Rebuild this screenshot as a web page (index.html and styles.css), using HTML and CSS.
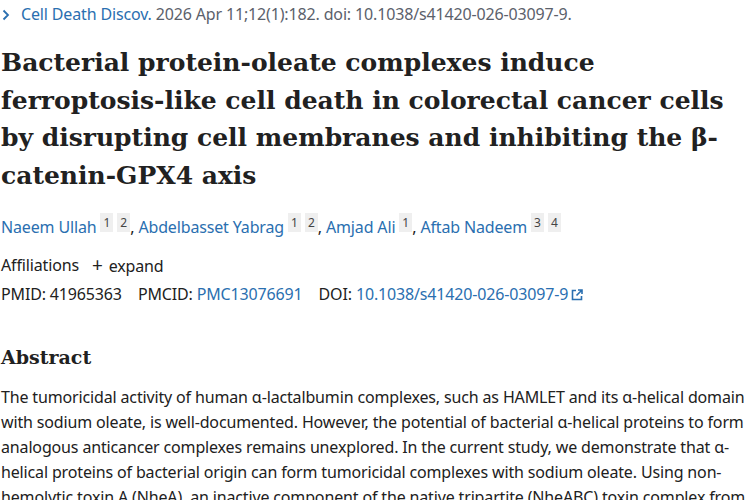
FILE: index.html
```html
<!DOCTYPE html>
<html>
<head>
<meta charset="utf-8">
<link rel="stylesheet" href="styles.css">
</head>
<body>
<main class="article">
  <div class="cit">
    <svg class="chev" width="8" height="12" viewBox="0 0 8 12"><path d="M1.5 1.5 L6 6 L1.5 10.5" fill="none" stroke="#2a6fb0" stroke-width="1.8"/></svg><a class="link journal">Cell Death Discov.</a>&nbsp;<span class="gray">2026 Apr 11;12(1):182. doi: 10.1038/s41420-026-03097-9.</span>
  </div>
  <h1 class="title">Bacterial protein-oleate complexes induce ferroptosis-like cell death in colorectal cancer cells by disrupting cell membranes and inhibiting the β-catenin-GPX4 axis</h1>
  <div class="authors">
    <a class="link">Naeem Ullah</a><sup class="aff">1</sup><sup class="aff">2</sup>, <a class="link">Abdelbasset Yabrag</a><sup class="aff">1</sup><sup class="aff">2</sup>, <a class="link">Amjad Ali</a><sup class="aff">1</sup>, <a class="link">Aftab Nadeem</a><sup class="aff">3</sup><sup class="aff">4</sup>
  </div>
  <div class="affil">Affiliations <span class="expand"><span class="plus">+</span> expand</span></div>
  <div class="ids">
    <span class="id">PMID: 41965363</span>
    <span class="id">PMCID: <a class="link">PMC13076691</a></span>
    <span class="id">DOI: <a class="link">10.1038/s41420-026-03097-9</a><svg class="ext" width="12" height="12" viewBox="0 0 12 12"><path d="M5 1.5 H1.5 V10.5 H10.5 V7" fill="none" stroke="#2a6fb0" stroke-width="1.6"/><path d="M7 1 H11 V5 M11 1 L5.5 6.5" fill="none" stroke="#2a6fb0" stroke-width="1.6"/></svg></span>
  </div>
  <h2 class="abs-h">Abstract</h2>
  <p class="abs">The tumoricidal activity of human α-lactalbumin complexes, such as HAMLET and its α-helical domain with sodium oleate, is well-documented. However, the potential of bacterial α-helical proteins to form analogous anticancer complexes remains unexplored. In the current study, we demonstrate that α-helical proteins of bacterial origin can form tumoricidal complexes with sodium oleate. Using non-hemolytic toxin A (NheA), an inactive component of the native tripartite (NheABC) toxin complex from</p>
</main>
</body>
</html>
```
FILE: styles.css
```css
html, body { margin: 0; padding: 0; background: #fff; }
body { font-family: "Noto Sans", "Open Sans", sans-serif; font-size: 16px; letter-spacing: -0.15px; color: #212121; overflow: hidden; }
.article { width: 749px; padding: 0 0 0 1px; }
.link { color: #2a6fb0; text-decoration: none; }
.gray { color: #5b616b; }
.cit { line-height: 20px; padding-top: 4px; white-space: nowrap; }
.chev { margin: 0 11px 0 1px; vertical-align: -1px; }
.title { font-family: "DejaVu Serif", serif; font-weight: 700; font-size: 25px; letter-spacing: 0; line-height: 37.5px; margin: 20px 0 0; color: #212121; width: 748px; }
.authors { line-height: 24px; margin-top: 21px; }
.aff { font-size: 12px; letter-spacing: 0; background: #efefef; color: #444; padding: 1px 3px; margin-left: 4px; vertical-align: 6px; line-height: 1; }
.affil { line-height: 24px; margin-top: 14px; display: flex; gap: 13px; }
.plus { font-size: 19px; margin-right: 2px; }
.ids { line-height: 24px; margin-top: 4px; display: flex; gap: 16px; }
.ext { margin-left: 3px; vertical-align: -1px; }
.abs-h { font-family: "DejaVu Serif", serif; font-weight: 700; font-size: 19px; letter-spacing: 0; line-height: 30px; margin: 36px 0 0; }
.abs { line-height: 25px; margin: 12.5px 0 0; width: 749px; }
```
